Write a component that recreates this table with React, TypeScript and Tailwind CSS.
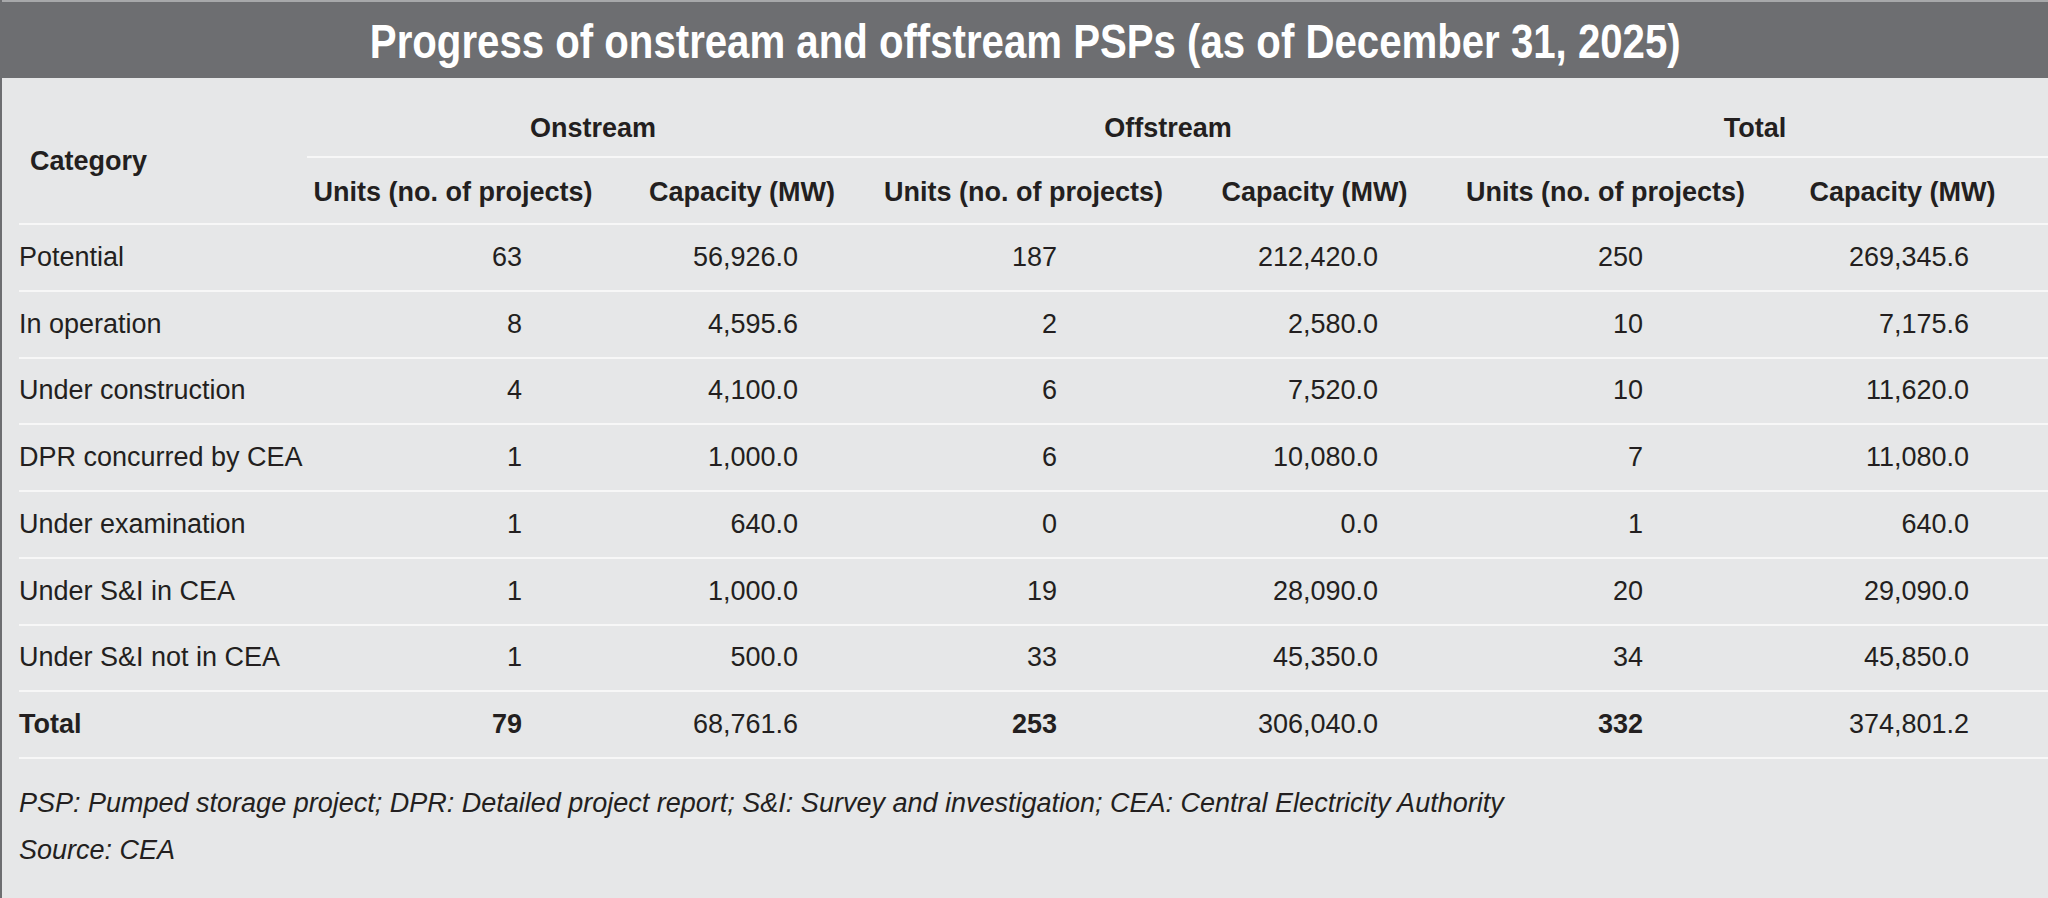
const rows = [
  { label: "Potential", v: ["63", "56,926.0", "187", "212,420.0", "250", "269,345.6"] },
  { label: "In operation", v: ["8", "4,595.6", "2", "2,580.0", "10", "7,175.6"] },
  { label: "Under construction", v: ["4", "4,100.0", "6", "7,520.0", "10", "11,620.0"] },
  { label: "DPR concurred by CEA", v: ["1", "1,000.0", "6", "10,080.0", "7", "11,080.0"] },
  { label: "Under examination", v: ["1", "640.0", "0", "0.0", "1", "640.0"] },
  { label: "Under S&I in CEA", v: ["1", "1,000.0", "19", "28,090.0", "20", "29,090.0"] },
  { label: "Under S&I not in CEA", v: ["1", "500.0", "33", "45,350.0", "34", "45,850.0"] },
];

const totals = ["79", "68,761.6", "253", "306,040.0", "332", "374,801.2"];

// right inset of the numbers in each data column
const numPad = ["pr-[96px]", "pr-[68px]", "pr-[124px]", "pr-[70px]", "pr-[120px]", "pr-[79px]"];

const grid =
  "grid grid-cols-[269px_330px_248px_315px_267px_315px_285px]";

function DataRow({ label, v, bold }: { label: string; v: string[]; bold?: boolean }) {
  return (
    <div className={`${grid} h-[66.75px] border-b-2 border-[#f7f7f7] items-center`}>
      <div className={`whitespace-nowrap ${bold ? "font-bold" : ""}`}>{label}</div>
      {v.map((n, i) => (
        <div
          key={i}
          className={`text-right ${numPad[i]} ${bold && i % 2 === 0 ? "font-bold" : ""}`}
        >
          {n}
        </div>
      ))}
    </div>
  );
}

export default function App() {
  return (
    <div className="w-[2048px] h-[898px] overflow-hidden bg-[#e6e7e8] border-l-2 border-[#6d6e71] text-[#231f20] font-['Liberation_Sans',Arial,sans-serif] text-[27px] leading-none">
      <div className="h-[78px] border-t-2 border-[#a7a8aa] bg-[#6d6e71] flex items-center justify-center text-white font-bold text-[49px] pt-[2px]">
        <span className="inline-block whitespace-nowrap scale-x-[0.82]">
          Progress of onstream and offstream PSPs (as of December 31, 2025)
        </span>
      </div>

      <div className="pl-[17px]">
        <div className={`${grid} grid-rows-[80px_65px] border-b-2 border-[#f7f7f7] font-bold`}>
          <div className="row-span-2 flex items-center pl-[11px] pt-[21px]">Category</div>
          <div className="col-span-2 ml-[19px] border-b-2 border-[#f7f7f7] flex items-center justify-center pl-[13px] pt-[22px]">
            Onstream
          </div>
          <div className="col-span-2 border-b-2 border-[#f7f7f7] flex items-center justify-center pl-[22px] pt-[22px]">
            Offstream
          </div>
          <div className="col-span-2 border-b-2 border-[#f7f7f7] flex items-center justify-center pl-[14px] pt-[22px]">
            Total
          </div>
          <div className="flex items-center justify-center pt-[3px]">Units (no. of projects)</div>
          <div className="flex items-center justify-center pt-[3px]">Capacity (MW)</div>
          <div className="flex items-center justify-center pt-[3px]">Units (no. of projects)</div>
          <div className="flex items-center justify-center pt-[3px]">Capacity (MW)</div>
          <div className="flex items-center justify-center pt-[3px]">Units (no. of projects)</div>
          <div className="flex items-center justify-center pt-[3px] pr-[6px]">Capacity (MW)</div>
        </div>

        {rows.map((r) => (
          <DataRow key={r.label} label={r.label} v={r.v} />
        ))}
        <DataRow label="Total" v={totals} bold />

        <div className="pt-[21px] italic leading-[47px]">
          <p>PSP: Pumped storage project; DPR: Detailed project report; S&amp;I: Survey and investigation; CEA: Central Electricity Authority</p>
          <p>Source: CEA</p>
        </div>
      </div>
    </div>
  );
}
